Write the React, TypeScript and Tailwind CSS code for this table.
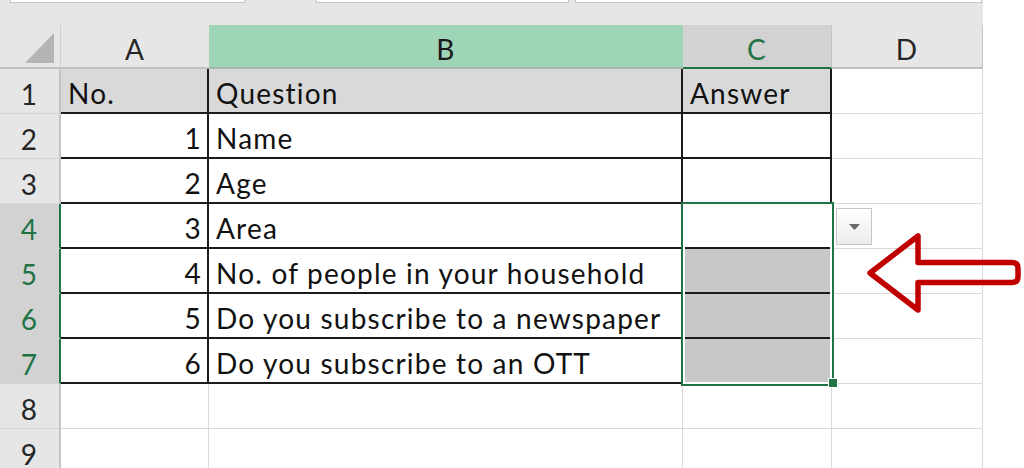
import React from "react";

type RowData = { n: number; a?: string; b?: string; c?: string };

const rows: RowData[] = [
  { n: 1, a: "No.", b: "Question", c: "Answer" },
  { n: 2, a: "1", b: "Name" },
  { n: 3, a: "2", b: "Age" },
  { n: 4, a: "3", b: "Area" },
  { n: 5, a: "4", b: "No. of people in your household" },
  { n: 6, a: "5", b: "Do you subscribe to a newspaper" },
  { n: 7, a: "6", b: "Do you subscribe to an OTT" },
  { n: 8 },
  { n: 9 },
];

function HeaderRow() {
  return (
    <div className="flex h-[44px]">
      {/* corner */}
      <div className="w-[61px] shrink-0 bg-[#e6e6e6] border-r border-r-[#d0d0d0] border-b-2 border-b-[#c0c0c0] relative">
        <svg className="absolute left-[25px] top-[8px]" width="30" height="30" viewBox="0 0 30 30">
          <polygon points="29,0 29,30 0,30" fill="#b4b4b4" />
        </svg>
      </div>
      <div className="w-[148px] shrink-0 bg-[#e6e6e6] border-b-2 border-b-[#c0c0c0] flex items-center justify-center pt-[5px] text-[#262626]">
        A
      </div>
      <div className="w-[474px] shrink-0 bg-[#9fd5b7] border-b-2 border-b-[#a9b8ae] flex items-center justify-center pt-[5px] text-[#1a1a1a]">
        B
      </div>
      <div className="w-[149px] shrink-0 bg-[#d2d2d2] border-r border-r-[#c4c4c4] border-b-2 border-b-[#217346] flex items-center justify-center pt-[5px] text-[#217346]">
        C
      </div>
      <div className="w-[151px] shrink-0 bg-[#e6e6e6] border-r border-r-[#c4c4c4] border-b-2 border-b-[#c0c0c0] flex items-center justify-center pt-[5px] text-[#262626]">
        D
      </div>
    </div>
  );
}

function SheetRow({ r }: { r: RowData }) {
  const sel = r.n >= 4 && r.n <= 7;
  const inTable = r.n <= 7;
  const head = r.n === 1;
  const shaded = r.n >= 5 && r.n <= 7;
  const grid = "border-r border-b border-[#d9d9d9]";
  const black = "border-r-2 border-b-2 border-[#1a1a1a]";
  const fill = head ? "bg-[#d9d9d9]" : "bg-white";

  return (
    <div className="flex h-[45px]">
      <div
        className={`w-[61px] shrink-0 flex items-center justify-center pt-[5px] border-b border-b-[#d4d4d4] ${
          sel
            ? "bg-[#d2d2d2] text-[#217346] border-r-2 border-r-[#217346]"
            : "bg-[#e6e6e6] text-[#262626] border-r-2 border-r-[#c4c4c4]"
        }`}
      >
        {r.n}
      </div>
      <div
        className={`w-[148px] shrink-0 flex items-center pt-[5px] ${inTable ? black : grid} ${fill} ${
          head ? "pl-[7px]" : "justify-end pr-[5px]"
        }`}
      >
        {r.a}
      </div>
      <div className={`w-[474px] shrink-0 flex items-center pt-[5px] pl-[7px] whitespace-nowrap ${inTable ? black : grid} ${fill}`}>
        {r.b}
      </div>
      <div
        className={`w-[149px] shrink-0 flex items-center pt-[5px] pl-[7px] ${inTable ? black : grid} ${
          shaded ? "bg-[#c8c8c8]" : fill
        }`}
      >
        {r.c}
      </div>
      <div className={`w-[151px] shrink-0 ${grid}`} />
    </div>
  );
}

export default function App() {
  return (
    <div className="relative w-[1024px] h-[468px] overflow-hidden bg-white font-['Lato','Liberation_Sans',sans-serif] text-[28px] tracking-[1.2px] leading-none text-[#111]">
      {/* top strip with formula bar edges */}
      <div className="flex h-[25px] w-[983px] bg-[#e6e6e6]">
        <div className="ml-[10px] w-[235px] h-[3px] bg-white border-x border-b border-[#c6c6c6]" />
        <div className="ml-[71px] w-[253px] h-[3px] bg-white border-x border-b border-[#c6c6c6]" />
        <div className="ml-[6px] w-[407px] h-[3px] bg-white border-x border-b border-[#c6c6c6]" />
      </div>

      <HeaderRow />
      {rows.map((r) => (
        <SheetRow key={r.n} r={r} />
      ))}

      {/* selection C4:C7 */}
      <div className="absolute left-[681px] top-[202px] w-[153px] h-[184px] border-2 border-[#217346]">
        <div className="absolute inset-0 border-2 border-white" />
      </div>
      <div className="absolute left-[828px] top-[378px] w-[10px] h-[10px] bg-[#217346] border border-white" />

      {/* data validation dropdown */}
      <div className="absolute left-[836px] top-[208px] w-[36px] h-[37px] border border-[#c6c6c6] bg-gradient-to-b from-white to-[#ececec] flex items-center justify-center">
        <svg width="11" height="6" viewBox="0 0 11 6">
          <polygon points="0,0 11,0 5.5,6" fill="#6a6a6a" />
        </svg>
      </div>

      {/* red arrow */}
      <svg className="absolute left-0 top-0" width="1024" height="468" viewBox="0 0 1024 468">
        <path
          d="M870 273 L918 236 L918 262.5 L1012 262.5 Q1018 262.5 1018 268.5 L1018 276.5 Q1018 282.5 1012 282.5 L918 282.5 L918 310 Z"
          fill="none"
          stroke="#c00000"
          strokeWidth="5.5"
          strokeLinejoin="round"
        />
      </svg>
    </div>
  );
}
